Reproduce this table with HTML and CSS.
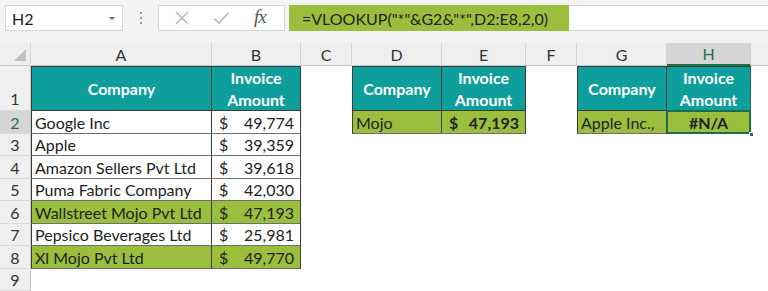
FILE: index.html
```html
<!DOCTYPE html>
<html>
<head>
<meta charset="utf-8">
<link rel="stylesheet" href="styles.css">
</head>
<body>
<div class="app">
  <div class="toolbar">
    <div class="namebox"><span class="ref">H2</span><span class="caret"></span></div>
    <div class="dots"><i></i><i></i><i></i></div>
    <div class="fxbtns">
      <svg class="ico" width="16" height="16" viewBox="0 0 16 16"><path d="M2 2 L14 14 M14 2 L2 14" stroke="#b3b3b3" stroke-width="1.4" fill="none"/></svg>
      <svg class="ico" width="18" height="16" viewBox="0 0 18 16"><path d="M2 8.5 L7 13 L16 3" stroke="#b3b3b3" stroke-width="1.6" fill="none"/></svg>
      <span class="fx">fx</span>
    </div>
    <div class="formula"><span class="ftext">=VLOOKUP("*"&amp;G2&amp;"*",D2:E8,2,0)</span></div>
  </div>
  <div class="sheet">
    <div class="corner"><span class="tri"></span></div>
    <div class="ch">A</div><div class="ch">B</div><div class="ch">C</div><div class="ch">D</div><div class="ch">E</div><div class="ch">F</div><div class="ch">G</div><div class="ch ch-sel">H</div><div class="ch ch-end"></div>

    <div class="rh rh-1">1</div>
    <div class="hd bl bt">Company</div><div class="hd bt">Invoice<br>Amount</div><div class="c"></div>
    <div class="hd bl bt">Company</div><div class="hd bt">Invoice<br>Amount</div><div class="c"></div>
    <div class="hd bl bt">Company</div><div class="hd bt hd-sel">Invoice<br>Amount</div><div class="c"></div>

    <div class="rh rh-sel">2</div>
    <div class="t w bl">Google Inc</div><div class="t w num"><span>$</span><span>49,774</span></div><div class="c"></div>
    <div class="t g bl">Mojo</div><div class="t g num bold"><span>$</span><span>47,193</span></div><div class="c"></div>
    <div class="t g bl">Apple Inc.,</div><div class="t g bold center active">#N/A<span class="handle"></span></div><div class="c"></div>

    <div class="rh">3</div>
    <div class="t w bl">Apple</div><div class="t w num"><span>$</span><span>39,359</span></div><div class="c wide"></div>

    <div class="rh">4</div>
    <div class="t w bl">Amazon Sellers Pvt Ltd</div><div class="t w num"><span>$</span><span>39,618</span></div><div class="c wide"></div>

    <div class="rh">5</div>
    <div class="t w bl">Puma Fabric Company</div><div class="t w num"><span>$</span><span>42,030</span></div><div class="c wide"></div>

    <div class="rh">6</div>
    <div class="t g bl">Wallstreet Mojo Pvt Ltd</div><div class="t g num"><span>$</span><span>47,193</span></div><div class="c wide"></div>

    <div class="rh">7</div>
    <div class="t w bl">Pepsico Beverages Ltd</div><div class="t w num"><span>$</span><span>25,981</span></div><div class="c wide"></div>

    <div class="rh">8</div>
    <div class="t g bl">Xl Mojo Pvt Ltd</div><div class="t g num"><span>$</span><span>49,770</span></div><div class="c wide"></div>

    <div class="rh">9</div>
    <div class="c full"></div>
  </div>
</div>
</body>
</html>
```

FILE: styles.css
```css
* { box-sizing: border-box; }
html, body { margin: 0; padding: 0; background: #fff; }
body { font-family: Lato, "Liberation Sans", sans-serif; width: 768px; height: 291px; overflow: hidden; }

.toolbar {
  height: 43px;
  background: #f3f3f3;
  display: flex;
  align-items: flex-start;
  padding: 5px 0 0 5px;
}
.namebox {
  width: 118px; height: 26px;
  background: #fff;
  border: 1px solid #d6d6d6;
  display: flex; align-items: center; justify-content: space-between;
  padding: 0 7px 0 6px;
  font-size: 16px; color: #222;
}
.caret { width: 0; height: 0; border-left: 3px solid transparent; border-right: 3px solid transparent; border-top: 3px solid #666; margin-top: 1px; }
.dots {
  width: 35px; height: 26px;
  display: flex; flex-direction: column; align-items: center; justify-content: center; gap: 3px;
}
.dots i { width: 2px; height: 2px; background: #9a9a9a; display: block; }
.fxbtns {
  width: 127px; height: 26px;
  background: #fff;
  border: 1px solid #d6d6d6;
  display: flex; align-items: center;
  padding-left: 15px;
}
.fxbtns .ico:first-child { margin-right: 22px; }
.fxbtns .ico:nth-child(2) { margin-right: 24px; }
.fx {
  font-family: "Liberation Serif", serif; font-style: italic; font-size: 19px; color: #555;
  letter-spacing: -1px; margin-top: -2px;
}
.formula {
  margin-left: 4px;
  flex: 1; height: 26px;
  background: #fff;
  border-top: 1px solid #d6d6d6;
  border-bottom: 1px solid #d6d6d6;
  display: flex;
}
.ftext {
  width: 280px;
  background: #99bf3c;
  font-size: 16px; color: #222;
  display: flex; align-items: center;
  padding-left: 13px;
  margin-top: -1px; height: 26px;
}

.sheet {
  display: grid;
  grid-template-columns: 31px 181px 89px 51px 90px 84px 51px 90px 84px 17px;
  grid-template-rows: 23px 45px 23px 22px 23px 22px 23px 22px 23px 22px;
  font-size: 16px;
  color: #222;
}
.corner {
  background: #efefef;
  border-right: 1px solid #d4d4d4;
  border-bottom: 1px solid #c8c8c8;
  position: relative;
}
.tri {
  position: absolute; right: 4px; bottom: 4px;
  width: 0; height: 0;
  border-left: 12px solid transparent;
  border-bottom: 12px solid #c2c2c2;
}
.ch {
  background: #efefef;
  border-right: 1px solid #d4d4d4;
  border-bottom: 1px solid #c8c8c8;
  display: flex; align-items: center; justify-content: center;
  font-size: 16px; color: #333;
}
.ch-sel { background: #d6d6d6; color: #217346; border-bottom: 2px solid #217346; }
.ch-end { border-right: none; }
.rh {
  background: #efefef;
  border-right: 1px solid #c8c8c8;
  border-bottom: 1px solid #dadada;
  display: flex; align-items: center; justify-content: center;
  font-size: 16px; color: #333;
}
.rh-1 { align-items: flex-end; padding-bottom: 2px; }
.rh-sel { background: #d6d6d6; color: #217346; }

.c { background: #fff; }
.wide { grid-column: span 7; }
.full { grid-column: span 9; }

.hd {
  background: #0e9e9c;
  color: #fff;
  font-weight: 700;
  font-size: 16px;
  line-height: 22px;
  display: flex; align-items: center; justify-content: center; text-align: center;
  border-right: 1px solid #3c3c3c;
  border-bottom: 1px solid #3c3c3c;
}
.hd-sel { border-color: #1d6a55; }
.bl { border-left: 1px solid #3c3c3c; }
.bt { border-top: 1px solid #3c3c3c; }

.t {
  border-right: 1px solid #3c3c3c;
  border-bottom: 1px solid #6e6e6e;
  display: flex; align-items: center;
  padding: 0 3px;
  white-space: nowrap;
}
.w { background: #fff; }
.g { background: #99bf3c; }
.num { justify-content: space-between; padding: 0 6px 0 7px; }
.bold { font-weight: 700; }
.center { justify-content: center; }
.active { position: relative; }
.active::after {
  content: ""; position: absolute; left: -1px; top: -1px; right: -1px; bottom: -1px;
  border: 2px solid #1e6b4c;
}
.handle {
  position: absolute; right: -4px; bottom: -4px; width: 5px; height: 5px;
  background: #1e6b4c; border: 1px solid #fff; z-index: 2;
}
```
